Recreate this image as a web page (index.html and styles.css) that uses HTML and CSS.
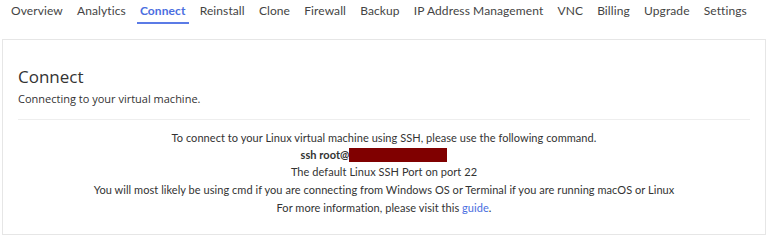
FILE: index.html
```html
<!DOCTYPE html>
<html lang="en">
<head>
    <meta charset="UTF-8">
    <meta name="viewport" content="width=device-width, initial-scale=1.0">
    <title>Connect</title>
    <link rel="stylesheet" href="styles.css">
</head>
<body>
    <div class="tabs">
        <a href="#">Overview</a>
        <a href="#">Analytics</a>
        <a href="#" class="active">Connect</a>
        <a href="#">Reinstall</a>
        <a href="#">Clone</a>
        <a href="#">Firewall</a>
        <a href="#">Backup</a>
        <a href="#">IP Address Management</a>
        <a href="#">VNC</a>
        <a href="#">Billing</a>
        <a href="#">Upgrade</a>
        <a href="#">Settings</a>
    </div>
    <div class="card">
        <h2>Connect</h2>
        <p class="sub">Connecting to your virtual machine.</p>
        <div class="info">
            <p>To connect to your Linux virtual machine using SSH, please use the following command.</p>
            <p class="cmd">ssh root@<span class="redact"></span></p>
            <p>The default Linux SSH Port on port 22</p>
            <p>You will most likely be using cmd if you are connecting from Windows OS or Terminal if you are running macOS or Linux</p>
            <p>For more information, please visit this <a href="#">guide</a>.</p>
        </div>
    </div>
</body>
</html>
```

FILE: styles.css
```css
body {
    font-family: Lato, "Noto Sans", sans-serif;
    margin: 0;
    padding: 0;
    background: #fff;
    color: #333;
}
.tabs {
    display: flex;
    justify-content: space-between;
    padding: 3px 21px 0 11px;
    height: 36px;
    box-sizing: border-box;
    white-space: nowrap;
}
.tabs a {
    font-size: 12px;
    letter-spacing: 0.1px;
    color: #444;
    text-decoration: none;
    line-height: 16px;
    height: 19px;
}
.tabs a.active {
    color: #4a6ee0;
    font-weight: 700;
    border-bottom: 2px solid #5b7be6;
    padding: 0 3px;
    margin: 0 -3px;
}
.card {
    margin: 3px 2px 4px;
    border: 1px solid #e6e6e6;
    padding: 26px 15px 10px;
    height: 196px;
    box-sizing: border-box;
}
h2 {
    font-family: "Open Sans", sans-serif;
    font-weight: 400;
    font-size: 17px;
    color: #333;
    margin: 0;
    line-height: 22px;
}
.sub {
    font-family: "Open Sans", sans-serif;
    font-size: 11px;
    color: #333;
    margin: 3px 0 0;
    padding-bottom: 13px;
    border-bottom: 1px solid #eee;
}
.info {
    text-align: center;
    padding-top: 9px;
}
.info p {
    font-size: 11px;
    letter-spacing: 0.05px;
    margin: 0;
    line-height: 18px;
    color: #333;
}
.info p.cmd {
    font-weight: 700;
    line-height: 16px;
}
.redact {
    display: inline-block;
    width: 98px;
    height: 14px;
    margin-right: 20px;
    background: #800000;
    vertical-align: -3px;
}
.info a {
    color: #4a6ee0;
    text-decoration: none;
}
```
